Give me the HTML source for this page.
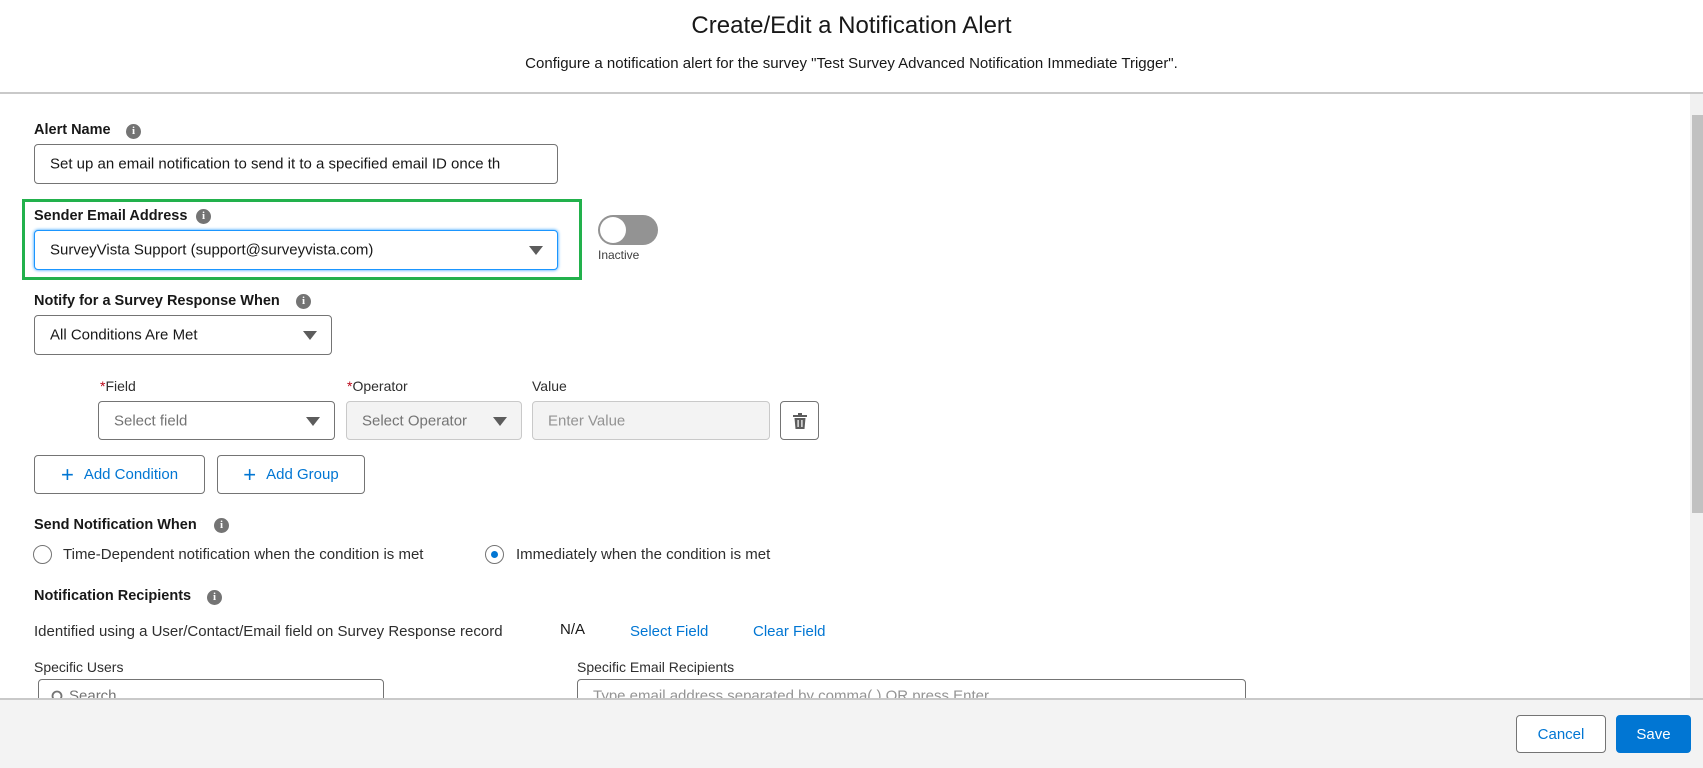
<!DOCTYPE html>
<html><head><meta charset="utf-8"><style>
*{box-sizing:border-box;margin:0;padding:0}
body{width:1703px;height:768px;overflow:hidden;background:#fff;font-family:"Liberation Sans",sans-serif;color:#181818;position:relative;font-size:15px}
.a{position:absolute;white-space:nowrap}
.lbl{font-weight:bold;font-size:14.5px;color:#181818}
.info{position:absolute;width:15px;height:15px;border-radius:50%;background:#747474;color:#fff;font-size:11px;font-weight:bold;text-align:center;line-height:15px;font-family:"Liberation Serif",serif}
.box{position:absolute;border:1px solid #747474;border-radius:4px;background:#fff}
.box span{position:absolute;left:15px;top:50%;transform:translateY(-50%);white-space:nowrap}
.caret{position:absolute;right:14px;top:50%;margin-top:-4px;width:0;height:0;border-left:7px solid transparent;border-right:7px solid transparent;border-top:9px solid #5c5c5c}
.small{font-size:14px;color:#2e2e2e}
.btn{position:absolute;border:1px solid #747474;border-radius:4px;background:#fff;color:#0176d3;font-size:15px;display:flex;align-items:center;justify-content:center}
.link{color:#0176d3}
</style></head><body>
<div class="a" style="left:0;width:1703px;text-align:center;top:12px;font-size:24px;color:#181818">Create/Edit a Notification Alert</div>
<div class="a" style="left:0;width:1703px;text-align:center;top:55px;font-size:15px;color:#181818">Configure a notification alert for the survey "Test Survey Advanced Notification Immediate Trigger".</div>
<div class="a" style="left:0;top:92px;width:1703px;height:2px;background:#c9c9c9"></div>

<div class="a lbl" style="left:34px;top:122px">Alert Name</div>
<div class="info" style="left:126px;top:124px">i</div>
<div class="box" style="left:34px;top:144px;width:524px;height:40px"><span>Set up an email notification to send it to a specified email ID once th</span></div>

<div class="a" style="left:22px;top:199px;width:560px;height:81px;border:3px solid #22b14c"></div>
<div class="a lbl" style="left:34px;top:208px">Sender Email Address</div>
<div class="info" style="left:196px;top:209px">i</div>
<div class="box" style="left:34px;top:230px;width:524px;height:40px;border-color:#1b96ff;box-shadow:0 0 3px #1b96ff"><span>SurveyVista Support (support@surveyvista.com)</span><div class="caret"></div></div>

<div class="a" style="left:598px;top:215px;width:60px;height:30px;border-radius:15px;background:#939393"></div>
<div class="a" style="left:600px;top:217px;width:26px;height:26px;border-radius:50%;background:#fff"></div>
<div class="a" style="left:598px;top:248px;font-size:12px;color:#3e3e3e">Inactive</div>

<div class="a lbl" style="left:34px;top:293px">Notify for a Survey Response When</div>
<div class="info" style="left:296px;top:294px">i</div>
<div class="box" style="left:34px;top:315px;width:298px;height:40px"><span>All Conditions Are Met</span><div class="caret"></div></div>

<div class="a small" style="left:100px;top:378px"><span style="color:#ba0517">*</span>Field</div>
<div class="a small" style="left:347px;top:378px"><span style="color:#ba0517">*</span>Operator</div>
<div class="a small" style="left:532px;top:378px">Value</div>
<div class="box" style="left:98px;top:401px;width:237px;height:39px"><span style="color:#747474">Select field</span><div class="caret"></div></div>
<div class="box" style="left:346px;top:401px;width:176px;height:39px;background:#f3f3f3;border-color:#c9c9c9"><span style="color:#747474">Select Operator</span><div class="caret"></div></div>
<div class="box" style="left:532px;top:401px;width:238px;height:39px;background:#f3f3f3;border-color:#c9c9c9"><span style="color:#939393">Enter Value</span></div>
<div class="box" style="left:780px;top:401px;width:39px;height:39px">
<svg style="position:absolute;left:12px;top:11px" width="14" height="16" viewBox="0 0 14 16"><rect x="0" y="2" width="14" height="2" fill="#5c5c5c"/><rect x="5" y="0" width="4" height="2" fill="#5c5c5c"/><path d="M1.5 5h11l-1 11h-9z" fill="#5c5c5c"/><rect x="4.5" y="7" width="1.2" height="7" fill="#fff"/><rect x="8.3" y="7" width="1.2" height="7" fill="#fff"/></svg></div>

<div class="btn" style="left:34px;top:455px;width:171px;height:39px"><span style="font-size:22px;margin-right:10px;line-height:1">+</span>Add Condition</div>
<div class="btn" style="left:217px;top:455px;width:148px;height:39px"><span style="font-size:22px;margin-right:10px;line-height:1">+</span>Add Group</div>

<div class="a lbl" style="left:34px;top:517px">Send Notification When</div>
<div class="info" style="left:214px;top:518px">i</div>
<div class="a" style="left:33px;top:545px;width:19px;height:19px;border-radius:50%;border:1px solid #747474"></div>
<div class="a" style="left:63px;top:546px;color:#2e2e2e">Time-Dependent notification when the condition is met</div>
<div class="a" style="left:485px;top:545px;width:19px;height:19px;border-radius:50%;border:1px solid #747474"></div>
<div class="a" style="left:491px;top:551px;width:7px;height:7px;border-radius:50%;background:#0176d3"></div>
<div class="a" style="left:516px;top:546px;color:#2e2e2e">Immediately when the condition is met</div>

<div class="a lbl" style="left:34px;top:588px">Notification Recipients</div>
<div class="info" style="left:207px;top:590px">i</div>
<div class="a" style="left:34px;top:623px;color:#2e2e2e">Identified using a User/Contact/Email field on Survey Response record</div>
<div class="a" style="left:560px;top:621px;color:#181818">N/A</div>
<div class="a link" style="left:630px;top:623px">Select Field</div>
<div class="a link" style="left:753px;top:623px">Clear Field</div>
<div class="a small" style="left:34px;top:659px">Specific Users</div>
<div class="a small" style="left:577px;top:659px">Specific Email Recipients</div>
<div class="box" style="left:38px;top:679px;width:346px;height:40px">
<svg style="position:absolute;left:12px;top:10px" width="14" height="14" viewBox="0 0 14 14"><circle cx="6" cy="6" r="4.5" fill="none" stroke="#747474" stroke-width="1.8"/><path d="M9.3 9.3L13 13" stroke="#747474" stroke-width="1.8"/></svg>
<span style="top:16px;left:30px;color:#747474">Search...</span></div>
<div class="box" style="left:577px;top:679px;width:669px;height:40px"><span style="top:16px;color:#939393">Type email address separated by comma(,) OR press Enter</span></div>

<div class="a" style="left:1690px;top:94px;width:13px;height:605px;background:#f1f1f1"></div>
<div class="a" style="left:1692px;top:115px;width:11px;height:398px;background:#c1c1c1"></div>

<div class="a" style="left:0;top:698px;width:1703px;height:70px;background:#f3f3f3;border-top:2px solid #c9c9c9"></div>
<div class="btn" style="left:1516px;top:715px;width:90px;height:38px;border-color:#747474">Cancel</div>
<div class="btn" style="left:1616px;top:715px;width:75px;height:38px;background:#0176d3;border-color:#0176d3;color:#fff">Save</div>
</body></html>
